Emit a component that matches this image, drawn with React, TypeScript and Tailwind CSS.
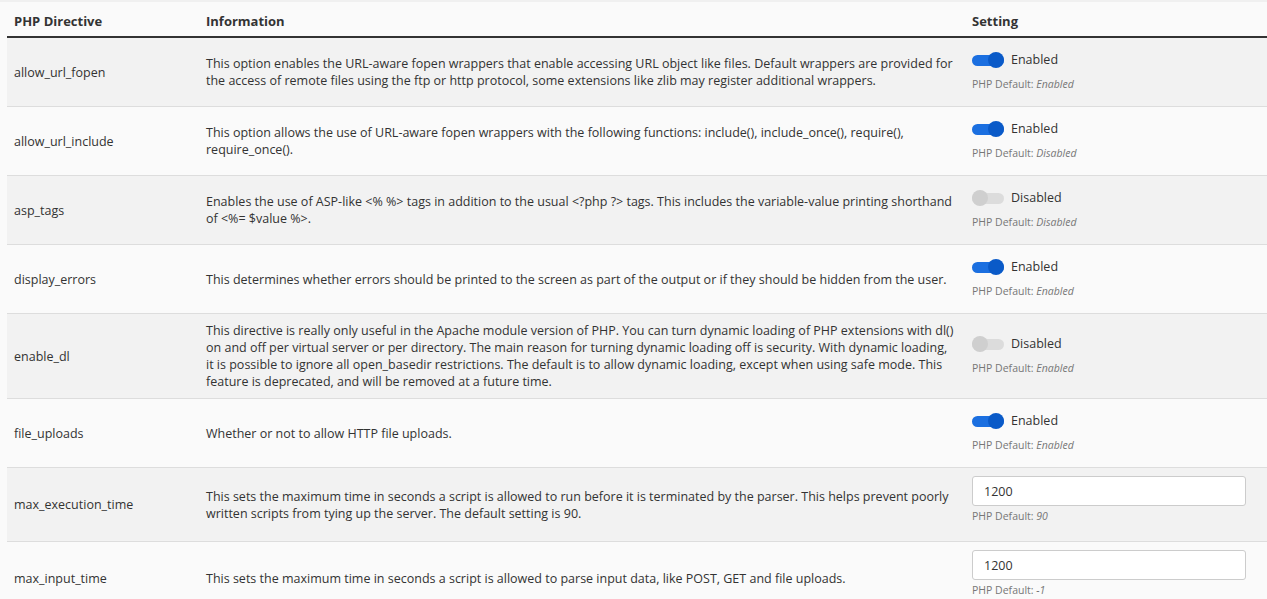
import React from 'react'

type Row = {
  name: string
  info: string
  kind: 'toggle' | 'input'
  on?: boolean
  value?: string
  def: string
}

const rows: Row[] = [
  {
    name: 'allow_url_fopen',
    info: 'This option enables the URL-aware fopen wrappers that enable accessing URL object like files. Default wrappers are provided for the access of remote files using the ftp or http protocol, some extensions like zlib may register additional wrappers.',
    kind: 'toggle',
    on: true,
    def: 'Enabled',
  },
  {
    name: 'allow_url_include',
    info: 'This option allows the use of URL-aware fopen wrappers with the following functions: include(), include_once(), require(), require_once().',
    kind: 'toggle',
    on: true,
    def: 'Disabled',
  },
  {
    name: 'asp_tags',
    info: 'Enables the use of ASP-like <% %> tags in addition to the usual <?php ?> tags. This includes the variable-value printing shorthand of <%= $value %>.',
    kind: 'toggle',
    on: false,
    def: 'Disabled',
  },
  {
    name: 'display_errors',
    info: 'This determines whether errors should be printed to the screen as part of the output or if they should be hidden from the user.',
    kind: 'toggle',
    on: true,
    def: 'Enabled',
  },
  {
    name: 'enable_dl',
    info: 'This directive is really only useful in the Apache module version of PHP. You can turn dynamic loading of PHP extensions with dl() on and off per virtual server or per directory. The main reason for turning dynamic loading off is security. With dynamic loading, it is possible to ignore all open_basedir restrictions. The default is to allow dynamic loading, except when using safe mode. This feature is deprecated, and will be removed at a future time.',
    kind: 'toggle',
    on: false,
    def: 'Enabled',
  },
  {
    name: 'file_uploads',
    info: 'Whether or not to allow HTTP file uploads.',
    kind: 'toggle',
    on: true,
    def: 'Enabled',
  },
  {
    name: 'max_execution_time',
    info: 'This sets the maximum time in seconds a script is allowed to run before it is terminated by the parser. This helps prevent poorly written scripts from tying up the server. The default setting is 90.',
    kind: 'input',
    value: '1200',
    def: '90',
  },
  {
    name: 'max_input_time',
    info: 'This sets the maximum time in seconds a script is allowed to parse input data, like POST, GET and file uploads.',
    kind: 'input',
    value: '1200',
    def: '-1',
  },
]

function Toggle({ on }: { on: boolean }) {
  return (
    <div className="flex items-center h-[24px]">
      <div className="relative w-[32px] h-[16px] flex items-center">
        <div className={`w-full h-[11px] rounded-full ${on ? 'bg-[#1b6fe0]' : 'bg-[#dcdcdc]'}`} />
        {on ? (
          <div className="absolute right-0 top-0 w-[16px] h-[16px] rounded-full bg-[#0a5ac8]" />
        ) : (
          <div className="absolute left-0 top-0 w-[16px] h-[16px] rounded-full bg-[#cfcfcf]" />
        )}
      </div>
      <span className="ml-[7px] text-[12.5px] text-[#333]">{on ? 'Enabled' : 'Disabled'}</span>
    </div>
  )
}

export default function App() {
  return (
    <div
      className="min-h-screen bg-[#fafafa] pl-[7px] overflow-hidden"
      style={{ fontFamily: '"Open Sans", "Noto Sans", sans-serif' }}
    >
      <div className="h-[2px] bg-[#f0f0f0] -ml-[7px]" />
      <table className="w-full border-collapse text-[#333]">
        <thead>
          <tr className="border-b-2 border-[#333]">
            <th className="w-[192px] h-[35px] px-[7px] pt-[10px] align-top text-left text-[13px] leading-[18px] font-bold">PHP Directive</th>
            <th className="w-[766px] px-[7px] pt-[10px] align-top text-left text-[13px] leading-[18px] font-bold">Information</th>
            <th className="px-[7px] pt-[10px] align-top text-left text-[13px] leading-[18px] font-bold">Setting</th>
          </tr>
        </thead>
        <tbody>
          {rows.map((r, i) => (
            <tr key={r.name} className={`border-b border-[#dddddd] ${i % 2 === 0 ? 'bg-[#f2f2f2]' : 'bg-[#fafafa]'}`}>
              <td className="px-[7px] py-[8px] align-middle text-[12.5px] leading-[17px]">{r.name}</td>
              <td className="px-[7px] py-[8px] align-middle text-[12.5px] leading-[17px]">{r.info}</td>
              <td className="px-[7px] py-[8px] align-middle">
                <div className={r.kind === 'toggle' ? 'pt-[2px] pb-[6px]' : 'pb-[9px]'}>
                  {r.kind === 'toggle' ? (
                    <Toggle on={!!r.on} />
                  ) : (
                    <input
                      readOnly
                      value={r.value}
                      className="w-[274px] h-[30px] px-[11px] rounded-[3px] border border-[#cccccc] bg-white text-[12.5px] text-[#333] outline-none"
                    />
                  )}
                  <div className={`${r.kind === 'toggle' ? 'mt-[4px]' : 'mt-[2px]'} text-[10.5px] leading-[16px] text-[#777]`}>
                    PHP Default: <em>{r.def}</em>
                  </div>
                </div>
              </td>
            </tr>
          ))}
        </tbody>
      </table>
    </div>
  )
}
